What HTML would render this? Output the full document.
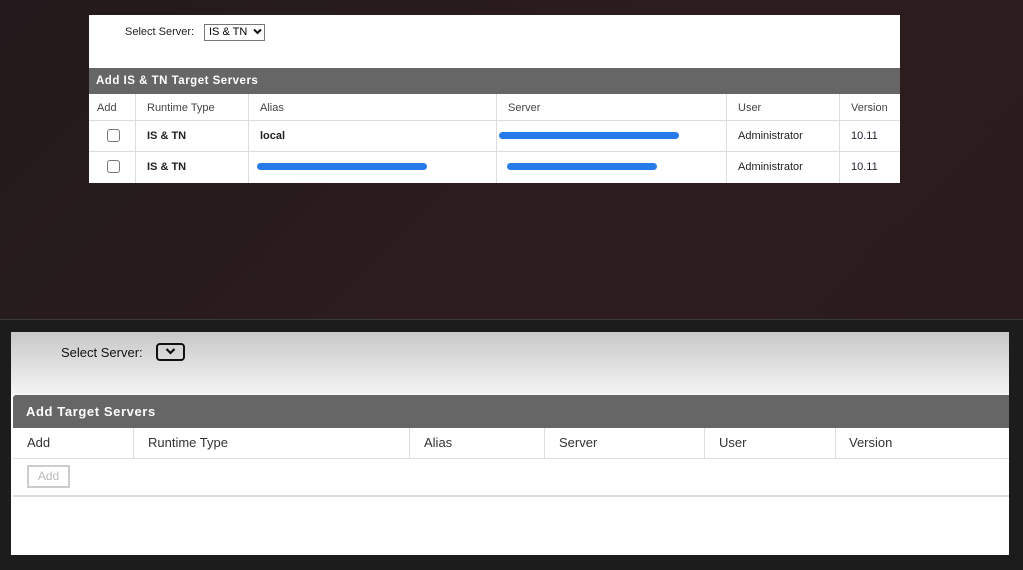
<!DOCTYPE html>
<html><head><style>
*{margin:0;padding:0;box-sizing:border-box}
body{width:1023px;height:570px;overflow:hidden;font-family:"Liberation Sans",Arial,sans-serif;position:relative;background:#1c1c1c}
.top{position:absolute;left:0;top:0;width:1023px;height:319px;background:linear-gradient(135deg,#221a1c,#2d1c1e 60%,#2a1b1d)}
.sep{position:absolute;left:0;top:319px;width:1023px;height:1px;background:#3a3a3a}
.p1{position:absolute;left:89px;top:15px;width:811px;height:168px;background:#fff}
.abs{position:absolute}
.hb1{left:0;top:53px;width:811px;height:26px;background:#666;color:#fff;font-weight:bold;font-size:11.5px;padding:7px 0 0 7px;letter-spacing:.5px}
.t{position:absolute;font-size:11px;color:#222}
.vl{position:absolute;width:1px;background:#ddd}
.hl{position:absolute;height:1px;background:#ddd}
.cb{position:absolute;width:13px;height:13px;border:1px solid #777;border-radius:3px;background:#fff}
.blue{position:absolute;height:7px;background:#1a73e8;border-radius:4px;opacity:.95}
.p2{position:absolute;left:11px;top:332px;width:998px;height:223px;background:linear-gradient(#c8c8c8,#f4f4f4 62px,#fff 63px)}
.hb2{left:2px;top:63px;width:996px;height:33px;background:#666;color:#fff;font-weight:bold;font-size:13px;padding:9px 0 0 13px;letter-spacing:.6px;border-top-left-radius:3px}
.t2{position:absolute;font-size:13px;color:#333}
</style></head><body>
<div class="top"></div><div class="sep"></div>
<div class="p1">
 <div class="t" style="left:36px;top:11px">Select Server:</div>
 <div class="abs" style="left:115px;top:9px;width:61px;height:17px;border:1px solid #777;font-size:11px;padding:1px 0 0 4px">IS &amp; TN <svg width="9" height="7" viewBox="0 0 9 7" style="margin-left:3px"><path d="M1 1.5L4.5 5L8 1.5" stroke="#111" stroke-width="2" fill="none"/></svg></div>
 <div class="abs hb1">Add IS &amp; TN Target Servers</div>
 <div class="hl" style="left:0;top:105px;width:811px"></div>
 <div class="hl" style="left:0;top:136px;width:811px"></div>
 <div class="vl" style="left:46px;top:79px;height:89px"></div>
 <div class="vl" style="left:159px;top:79px;height:89px"></div>
 <div class="vl" style="left:407px;top:79px;height:89px"></div>
 <div class="vl" style="left:637px;top:79px;height:89px"></div>
 <div class="vl" style="left:750px;top:79px;height:89px"></div>
 <div class="t" style="left:8px;top:87px;color:#444">Add</div>
 <div class="t" style="left:58px;top:87px;color:#444">Runtime Type</div>
 <div class="t" style="left:171px;top:87px;color:#444">Alias</div>
 <div class="t" style="left:419px;top:87px;color:#444">Server</div>
 <div class="t" style="left:649px;top:87px;color:#444">User</div>
 <div class="t" style="left:762px;top:87px;color:#444">Version</div>
 <div class="cb" style="left:18px;top:114px"></div>
 <div class="cb" style="left:18px;top:145px"></div>
 <div class="t" style="left:58px;top:115px;font-weight:bold">IS &amp; TN</div>
 <div class="t" style="left:58px;top:146px;font-weight:bold">IS &amp; TN</div>
 <div class="t" style="left:171px;top:115px;font-weight:bold">local</div>
 <div class="blue" style="left:168px;top:148px;width:170px"></div>
 <div class="blue" style="left:410px;top:117px;width:180px"></div>
 <div class="blue" style="left:418px;top:148px;width:150px"></div>
 <div class="t" style="left:649px;top:115px">Administrator</div>
 <div class="t" style="left:649px;top:146px">Administrator</div>
 <div class="t" style="left:762px;top:115px;color:#223">10.11</div>
 <div class="t" style="left:762px;top:146px;color:#223">10.11</div>
</div>
<div class="p2">
 <div class="t2" style="left:50px;top:13px;color:#111">Select Server:</div>
 <div class="abs" style="left:145px;top:11px;width:29px;height:18px;border:2px solid #111;border-radius:4px;text-align:center;line-height:12px"><svg width="11" height="8" viewBox="0 0 11 8"><path d="M1.5 2L5.5 6L9.5 2" stroke="#111" stroke-width="2.2" fill="none"/></svg></div>
 <div class="abs hb2">Add Target Servers</div>
 <div class="hl" style="left:2px;top:126px;width:996px"></div>
 <div class="hl" style="left:2px;top:163px;width:996px;height:2px"></div>
 <div class="vl" style="left:122px;top:96px;height:30px"></div>
 <div class="vl" style="left:398px;top:96px;height:30px"></div>
 <div class="vl" style="left:533px;top:96px;height:30px"></div>
 <div class="vl" style="left:693px;top:96px;height:30px"></div>
 <div class="vl" style="left:824px;top:96px;height:30px"></div>
 <div class="t2" style="left:16px;top:103px">Add</div>
 <div class="t2" style="left:137px;top:103px">Runtime Type</div>
 <div class="t2" style="left:413px;top:103px">Alias</div>
 <div class="t2" style="left:548px;top:103px">Server</div>
 <div class="t2" style="left:708px;top:103px">User</div>
 <div class="t2" style="left:838px;top:103px">Version</div>
 <div class="abs" style="left:16px;top:133px;width:43px;height:23px;border:2px solid #ccc;font-size:12px;color:#bbb;text-align:center;line-height:19px">Add</div>
</div>
</body></html>
